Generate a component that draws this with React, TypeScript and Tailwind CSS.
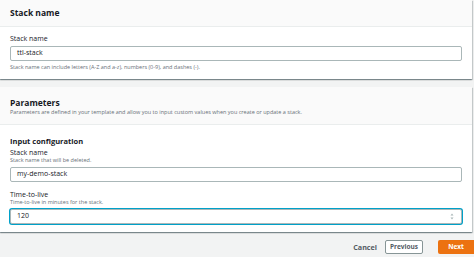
export default function App() {
  const card =
    "bg-white mr-[2px] shadow-[0_1px_1px_0_rgba(0,28,36,0.3),1px_1px_1px_0_rgba(0,28,36,0.15),-1px_1px_1px_0_rgba(0,28,36,0.15)]"
  const input =
    "h-[15px] flex items-center justify-between px-[6px] rounded-[2px] border border-[#aab7b8] bg-white text-[7px] text-[#16191f]"

  return (
    <div
      className="w-full h-[257px] overflow-hidden bg-[#f2f3f3] text-[#16191f]"
      style={{ fontFamily: '"Open Sans", sans-serif' }}
    >
      {/* Stack name card */}
      <div className={card}>
        <div className="h-[27px] flex items-center px-[10px] bg-[#fafafa] border-b border-[#eaeded]">
          <h2 className="text-[8.5px] font-bold">Stack name</h2>
        </div>
        <div className="px-[10px] pt-[7px] pb-[8px]">
          <div className="text-[7px] leading-[10px]">Stack name</div>
          <div className={`${input} mt-[2px]`}>ttl-stack</div>
          <div className="mt-[2px] text-[5.5px] leading-[8px] text-[#687078]">
            Stack name can include letters (A-Z and a-z), numbers (0-9), and dashes (-).
          </div>
        </div>
      </div>

      {/* Parameters card */}
      <div className={`${card} mt-[8px]`}>
        <div className="px-[10px] pt-[10px] pb-[8px] bg-[#fafafa] border-b border-[#eaeded]">
          <h2 className="text-[8.5px] leading-[11px] font-bold">Parameters</h2>
          <p className="text-[5.5px] leading-[8px] text-[#687078]">
            Parameters are defined in your template and allow you to input custom values when you create or update a stack.
          </p>
        </div>
        <div className="px-[10px] pt-[11px] pb-[8px]">
          <h3 className="text-[7.5px] leading-[10px] font-bold">Input configuration</h3>
          <div className="mt-[3px] text-[7px] leading-[8px]">Stack name</div>
          <div className="text-[5.5px] leading-[7px] text-[#687078]">Stack name that will be deleted.</div>
          <div className={`${input} mt-[3px]`}>my-demo-stack</div>

          <div className="mt-[9px] text-[7px] leading-[8px]">Time-to-live</div>
          <div className="text-[5.5px] leading-[7px] text-[#687078]">Time-to-live in minutes for the stack.</div>
          <div className={`${input} mt-[3px] border-[#00a1c9] shadow-[0_0_0_1px_#00a1c9]`}>
            <span>120</span>
            <svg width="4" height="7" viewBox="0 0 4 7" className="mr-[1px]">
              <path d="M2 0.5 L3.5 2.5 H0.5 Z" fill="#aab7b8" />
              <path d="M2 6.5 L3.5 4.5 H0.5 Z" fill="#aab7b8" />
            </svg>
          </div>
        </div>
      </div>

      {/* Footer */}
      <div className="mt-[8px] flex items-center justify-end">
        <button className="text-[7.2px] font-bold text-[#545b64] mr-[8px]">Cancel</button>
        <button className="h-[14px] w-[38px] border border-[#879596] rounded-[2px] bg-white text-[6.5px] font-bold text-[#545b64] mr-[15px]">
          Previous
        </button>
        <button className="h-[14px] w-[36px] rounded-l-[2px] bg-[#ec7211] text-[6.5px] font-bold text-white">
          Next
        </button>
      </div>
    </div>
  )
}
